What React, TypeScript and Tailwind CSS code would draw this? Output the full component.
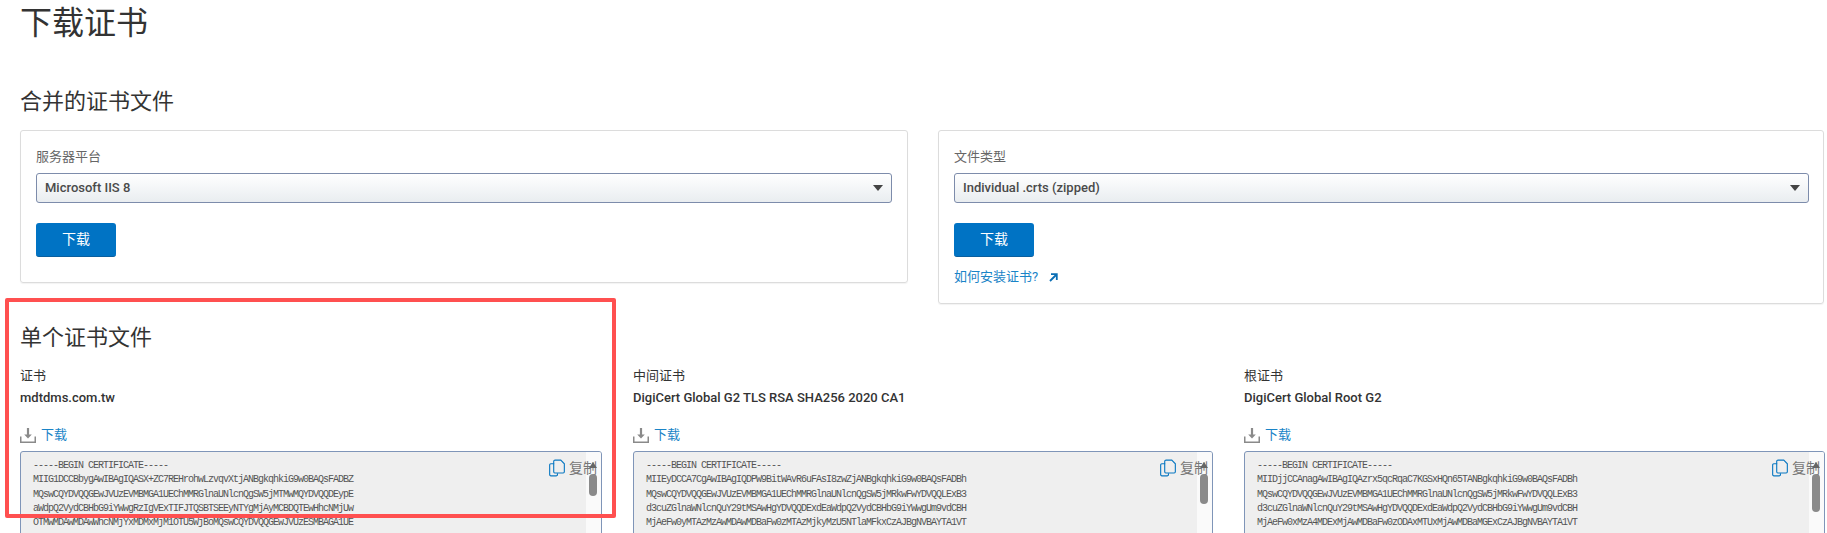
import React from "react";

const sans = "font-['Roboto','Noto_Sans_CJK_SC',sans-serif]";

const certs = [
	{
		label: "证书",
		name: "mdtdms.com.tw",
		thumb: "h-[22px]",
		lines: [
			"-----BEGIN CERTIFICATE-----",
			"MIIG1DCCBbygAwIBAgIQASX+ZC7REHrohwLzvqvXtjANBgkqhkiG9w0BAQsFADBZ",
			"MQswCQYDVQQGEwJVUzEVMBMGA1UEChMMRGlnaUNlcnQgSW5jMTMwMQYDVQQDEypE",
			"aWdpQ2VydCBHbG9iYWwgRzIgVExTIFJTQSBTSEEyNTYgMjAyMCBDQTEwHhcNMjUw",
			"OTMwMDAwMDAwWhcNMjYxMDMxMjM1OTU5WjBoMQswCQYDVQQGEwJVUzESMBAGA1UE",
		],
	},
	{
		label: "中间证书",
		name: "DigiCert Global G2 TLS RSA SHA256 2020 CA1",
		thumb: "h-[30px]",
		lines: [
			"-----BEGIN CERTIFICATE-----",
			"MIIEyDCCA7CgAwIBAgIQDPW9BitWAvR6uFAsI8zwZjANBgkqhkiG9w0BAQsFADBh",
			"MQswCQYDVQQGEwJVUzEVMBMGA1UEChMMRGlnaUNlcnQgSW5jMRkwFwYDVQQLExB3",
			"d3cuZGlnaWNlcnQuY29tMSAwHgYDVQQDExdEaWdpQ2VydCBHbG9iYWwgUm9vdCBH",
			"MjAeFw0yMTAzMzAwMDAwMDBaFw0zMTAzMjkyMzU5NTlaMFkxCzAJBgNVBAYTA1VT",
		],
	},
	{
		label: "根证书",
		name: "DigiCert Global Root G2",
		thumb: "h-[38px]",
		lines: [
			"-----BEGIN CERTIFICATE-----",
			"MIIDjjCCAnagAwIBAgIQAzrx5qcRqaC7KGSxHQn65TANBgkqhkiG9w0BAQsFADBh",
			"MQswCQYDVQQGEwJVUzEVMBMGA1UEChMMRGlnaUNlcnQgSW5jMRkwFwYDVQQLExB3",
			"d3cuZGlnaWNlcnQuY29tMSAwHgYDVQQDExdEaWdpQ2VydCBHbG9iYWwgUm9vdCBH",
			"MjAeFw0xMzA4MDExMjAwMDBaFw0zODAxMTUxMjAwMDBaMGExCzAJBgNVBAYTA1VT",
		],
	},
];

const DownloadIcon = () => (
	<svg width="16" height="16" viewBox="0 0 16 16" fill="none">
		<path d="M.75 9.5v5.750h14.500V9.500" stroke="#8a8a8a" strokeWidth="1.5" />
		<path d="M8 1v8.500" stroke="#8a8a8a" strokeWidth="2.2" />
		<path d="M4.200 7.600 8 11.600l3.800-4z" fill="#8a8a8a" />
	</svg>
);

const CopyIcon = () => (
	<svg width="16" height="18" viewBox="0 0 17 18" fill="none" stroke="#0a78c2" strokeWidth="1.2">
		<path d="M5.500 4.500H2A1.400 1.400 0 0 0 .7 6v10A1.400 1.400 0 0 0 2 17.300h5.500A1.400 1.400 0 0 0 9 16v-1.500" />
		<path d="M6 .7h6.500L16.300 4.500V13a1.300 1.300 0 0 1-1.300 1.300H6.200A1.300 1.300 0 0 1 5 13V2A1.300 1.300 0 0 1 6 .7z" />
	</svg>
);

const ExternalIcon = () => (
	<svg width="9" height="9" viewBox="0 0 9 9" fill="none" stroke="#0b6fb5" strokeWidth="1.8">
		<path d="M1 8 7.500 1.500M2 1.200h5.800V7" />
	</svg>
);

const SelectBox = ({ value }: { value: string }) => (
	<div className="flex h-[30px] items-center justify-between rounded-[3px] border border-[#7d8cab] bg-gradient-to-b from-white to-[#e9edf0] pr-[8px] pl-[8px]">
		<span className="text-[13px] font-medium text-[#4a4a4a]">{value}</span>
		<span className="h-0 w-0 border-x-[5px] border-t-[6px] border-x-transparent border-t-[#444]" />
	</div>
);

const DownloadButton = () => (
	<button className="mt-[20px] block h-[34px] w-[80px] rounded-[3px] border-b border-[#0a5f9e] bg-[#0073c4] text-[14px] text-white">
		下载
	</button>
);

const CertColumn = ({ cert }: { cert: (typeof certs)[number] }) => (
	<div>
		<p className="text-[13px] leading-[16px] text-[#333]">{cert.label}</p>
		<p className="mt-[5px] text-[13px] leading-[18px] font-medium text-[#333]">{cert.name}</p>
		<a className="mt-[19px] flex h-[18px] items-center gap-[5px] text-[13px] text-[#1a84c7]">
			<DownloadIcon />
			下载
		</a>
		<div className="relative mt-[7px] h-[100px] overflow-hidden rounded-t-[3px] border border-[#7f95b8] bg-[#efefef] pt-[7px] pl-[12px]">
			{cert.lines.map((line) => (
				<p
					key={line}
					className="font-['Liberation_Mono',monospace] text-[10px] leading-[14.3px] tracking-[-1px] whitespace-nowrap text-[#555]"
				>
					{line}
				</p>
			))}
			<div className="absolute top-0 right-0 bottom-0 w-[15px] bg-[#fafafa]" />
			<div className="absolute top-[7px] right-[4px] flex items-center gap-[4px] text-[14px] leading-[18px] text-[#777]">
				<CopyIcon />
				<span>复制</span>
			</div>
			<span className="absolute top-[10px] right-[4px] h-0 w-0 border-x-[4px] border-b-[6px] border-x-transparent border-b-[#666]" />
			<span className={`absolute top-[22px] right-[4px] w-[8px] rounded-full bg-[#8a8a8a] ${cert.thumb}`} />
		</div>
	</div>
);

export default function App() {
	return (
		<div className={`relative h-[533px] overflow-hidden bg-white pr-[3px] pl-[20px] ${sans}`}>
			<h1 className="pt-[7px] text-[32px] leading-[32px] font-normal text-[#333]">下载证书</h1>
			<h2 className="mt-[51px] text-[22px] leading-[24px] font-normal text-[#333]">合并的证书文件</h2>
			<div className="mt-[16px] grid grid-cols-[888px_886px] items-start gap-[30px]">
				<div className="h-[153px] rounded-[3px] border border-[#dcdcdc] px-[15px] pt-[18px] shadow-[0_1px_1px_rgba(0,0,0,0.05)]">
					<label className="block h-[24px] text-[13px] leading-[16px] text-[#666]">服务器平台</label>
					<SelectBox value="Microsoft IIS 8" />
					<DownloadButton />
				</div>
				<div className="h-[174px] rounded-[3px] border border-[#dcdcdc] pt-[18px] pr-[14px] pl-[15px] shadow-[0_1px_1px_rgba(0,0,0,0.05)]">
					<label className="block h-[24px] text-[13px] leading-[16px] text-[#666]">文件类型</label>
					<SelectBox value="Individual .crts (zipped)" />
					<DownloadButton />
					<a className="mt-[12px] flex items-center gap-[11px] text-[13px] leading-[16px] text-[#1a84c7]">
						如何安装证书?
						<ExternalIcon />
					</a>
				</div>
			</div>
			<h2 className="mt-[22px] text-[22px] leading-[24px] font-normal text-[#333]">单个证书文件</h2>
			<div className="mt-[18px] grid grid-cols-[582px_580px_581px] gap-[31px]">
				{certs.map((cert) => (
					<CertColumn key={cert.label} cert={cert} />
				))}
			</div>
			{/* annotation drawn over the page */}
			<div className="absolute top-[298px] left-[5px] h-[220px] w-[611px] rounded-[2px] border-4 border-[#ff5050]" />
		</div>
	);
}
